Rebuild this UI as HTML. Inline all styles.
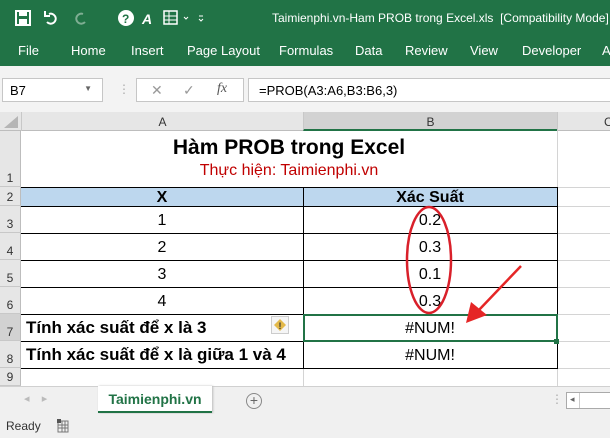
<!DOCTYPE html>
<html><head><meta charset="utf-8"><style>
*{margin:0;padding:0;box-sizing:border-box}
body{width:610px;height:438px;overflow:hidden;font-family:"Liberation Sans",sans-serif;background:#fff;position:relative}
.a{position:absolute}
.t{color:#fff;font-size:13px;white-space:nowrap}
.rh{position:absolute;left:0;width:21px;background:#e6e6e6;border-bottom:1px solid #c8c8c8;border-right:1px solid #bdbdbd;font-size:12px;color:#333;text-align:center}
.c{position:absolute;display:flex;align-items:center;justify-content:center;font-size:16px;color:#000;padding-top:2px}
.g{position:absolute;background:#d4d4d4}
</style></head><body>
<div class="a" style="left:0;top:0;width:610px;height:66px;background:#217346"></div>
<svg class="a" style="left:14px;top:8px" width="190" height="20" viewBox="0 0 190 20">
<rect x="2" y="3" width="14" height="14" fill="none" stroke="#fff" stroke-width="2"/><rect x="5" y="3" width="8" height="5" fill="#fff"/><rect x="5" y="11" width="8" height="6" fill="#fff"/>
<path d="M35 6 a5 5 0 1 1 -2 8" fill="none" stroke="#fff" stroke-width="2"/><path d="M31 3 v5 h5" fill="none" stroke="#fff" stroke-width="2"/>
<path d="M69 6 a5 5 0 1 0 2 8" fill="none" stroke="#7fae93" stroke-width="2"/>
<circle cx="112" cy="10" r="8" fill="#fff"/><text x="108" y="15" font-size="12" font-weight="bold" fill="#217346" font-family="Liberation Sans">?</text>
<text x="128" y="16" font-size="14" font-style="italic" font-weight="bold" fill="#fff" font-family="Liberation Sans">A</text>
<rect x="150" y="3" width="13" height="13" fill="none" stroke="#fff" stroke-width="1.5"/><path d="M150 8h13M150 12h13M155 3v13" stroke="#fff"/>
<path d="M170 9l2 2 2-2M185 8h4M185 11l2 2 2-2" stroke="#fff" fill="none"/>
</svg>
<div class="a t" style="left:272px;top:11px;font-size:12px">Taimienphi.vn-Ham PROB trong Excel.xls&nbsp; [Compatibility Mode]</div>
<div class="a t" style="left:18px;top:43px">File</div>
<div class="a t" style="left:71px;top:43px">Home</div>
<div class="a t" style="left:131px;top:43px">Insert</div>
<div class="a t" style="left:187px;top:43px">Page Layout</div>
<div class="a t" style="left:279px;top:43px">Formulas</div>
<div class="a t" style="left:355px;top:43px">Data</div>
<div class="a t" style="left:405px;top:43px">Review</div>
<div class="a t" style="left:470px;top:43px">View</div>
<div class="a t" style="left:522px;top:43px">Developer</div>
<div class="a t" style="left:602px;top:43px">A</div>
<div class="a" style="left:0;top:66px;width:610px;height:46px;background:#f3f3f3"></div>
<div class="a" style="left:2px;top:78px;width:101px;height:24px;background:#fff;border:1px solid #c6c6c6;font-size:13px;padding:4px 7px">B7<span style="position:absolute;right:10px;top:5px;font-size:8px;color:#666">▼</span></div>
<div class="a" style="left:118px;top:82px;color:#aaa;font-size:12px">⋮</div>
<div class="a" style="left:136px;top:78px;width:108px;height:24px;background:#fff;border:1px solid #c6c6c6;font-size:14px;color:#999"><span class="a" style="left:14px;top:3px">✕</span><span class="a" style="left:46px;top:3px">✓</span><span class="a" style="left:80px;top:2px;font-style:italic;font-family:'Liberation Serif';color:#555">fx</span></div>
<div class="a" style="left:248px;top:78px;width:370px;height:24px;background:#fff;border:1px solid #c6c6c6;font-size:13px;padding:4px 10px">=PROB(A3:A6,B3:B6,3)</div>
<div class="a" style="left:0;top:112px;width:610px;height:19px;background:#e6e6e6;border-bottom:1px solid #bdbdbd"></div>
<div class="a" style="left:4px;top:116px;width:0;height:0;border-left:14px solid transparent;border-bottom:12px solid #b5b5b5"></div>
<div class="a" style="left:21px;top:112px;width:282px;height:19px;border-left:1px solid #c8c8c8;text-align:center;font-size:12px;padding-top:3px;color:#333">A</div>
<div class="a" style="left:303px;top:112px;width:254px;height:19px;background:#d2d2d2;border-bottom:2px solid #217346;border-left:1px solid #c8c8c8;text-align:center;font-size:12px;padding-top:3px;color:#333">B</div>
<div class="a" style="left:557px;top:112px;width:60px;height:19px;border-left:1px solid #c8c8c8;font-size:12px;padding:3px 0 0 46px;color:#333">C</div>
<div class="rh" style="top:131px;height:56px;padding-top:40px">1</div>
<div class="rh" style="top:187px;height:19px;padding-top:3px">2</div>
<div class="rh" style="top:206px;height:27px;padding-top:11px">3</div>
<div class="rh" style="top:233px;height:27px;padding-top:11px">4</div>
<div class="rh" style="top:260px;height:27px;padding-top:11px">5</div>
<div class="rh" style="top:287px;height:27px;padding-top:11px">6</div>
<div class="rh" style="top:314px;height:27px;padding-top:11px;background:#d2d2d2">7</div>
<div class="rh" style="top:341px;height:27px;padding-top:11px">8</div>
<div class="rh" style="top:368px;height:18px;padding-top:2px">9</div>
<div class="g" style="left:557px;top:131px;width:1px;height:255px"></div>
<div class="g" style="left:557px;top:187px;width:60px;height:1px"></div>
<div class="g" style="left:557px;top:206px;width:60px;height:1px"></div>
<div class="g" style="left:557px;top:233px;width:60px;height:1px"></div>
<div class="g" style="left:557px;top:260px;width:60px;height:1px"></div>
<div class="g" style="left:557px;top:287px;width:60px;height:1px"></div>
<div class="g" style="left:557px;top:314px;width:60px;height:1px"></div>
<div class="g" style="left:557px;top:341px;width:60px;height:1px"></div>
<div class="g" style="left:557px;top:368px;width:60px;height:1px"></div>
<div class="g" style="left:303px;top:368px;width:1px;height:18px"></div>
<div class="a" style="left:21px;top:136px;width:536px;text-align:center;font-size:21px;font-weight:bold">Hàm PROB trong Excel</div>
<div class="a" style="left:21px;top:162px;width:536px;text-align:center;font-size:16px;color:#c00000">Thực hiện: Taimienphi.vn</div>
<div class="a" style="left:21px;top:187px;width:537px;height:182px;border:1px solid #000;border-left:none"></div>
<div class="a" style="left:21px;top:188px;width:536px;height:18px;background:#bdd7ee"></div>
<div class="a" style="left:303px;top:187px;width:1px;height:181px;background:#000"></div>
<div class="a" style="left:21px;top:206px;width:536px;height:1px;background:#000"></div>
<div class="a" style="left:21px;top:233px;width:536px;height:1px;background:#000"></div>
<div class="a" style="left:21px;top:260px;width:536px;height:1px;background:#000"></div>
<div class="a" style="left:21px;top:287px;width:536px;height:1px;background:#000"></div>
<div class="a" style="left:21px;top:314px;width:536px;height:1px;background:#000"></div>
<div class="a" style="left:21px;top:341px;width:536px;height:1px;background:#000"></div>
<div class="c" style="left:21px;top:187px;width:282px;height:19px;font-weight:bold">X</div>
<div class="c" style="left:303px;top:187px;width:254px;height:19px;font-weight:bold">Xác Suất</div>
<div class="c" style="left:21px;top:206px;width:282px;height:27px">1</div>
<div class="c" style="left:21px;top:233px;width:282px;height:27px">2</div>
<div class="c" style="left:21px;top:260px;width:282px;height:27px">3</div>
<div class="c" style="left:21px;top:287px;width:282px;height:27px">4</div>
<div class="c" style="left:303px;top:206px;width:254px;height:27px">0.2</div>
<div class="c" style="left:303px;top:233px;width:254px;height:27px">0.3</div>
<div class="c" style="left:303px;top:260px;width:254px;height:27px">0.1</div>
<div class="c" style="left:303px;top:287px;width:254px;height:27px">0.3</div>
<div class="a" style="left:26px;top:318px;font-size:17px;font-weight:bold">Tính xác suất để x là 3</div>
<div class="a" style="left:26px;top:345px;font-size:17px;font-weight:bold">Tính xác suất để x là giữa 1 và 4</div>
<div class="c" style="left:303px;top:314px;width:254px;height:27px">#NUM!</div>
<div class="c" style="left:303px;top:341px;width:254px;height:27px">#NUM!</div>
<div class="a" style="left:303px;top:314px;width:255px;height:28px;border:2px solid #217346"></div>
<div class="a" style="left:554px;top:339px;width:5px;height:5px;background:#217346"></div>
<div class="a" style="left:271px;top:316px;width:18px;height:18px;border:1px solid #ccc;background:#f5f5f5"></div>
<svg class="a" style="left:273px;top:318px" width="14" height="14"><path d="M7 1L13 7L7 13L1 7Z" fill="#e3b94a"/><text x="5.5" y="11" font-size="9" font-weight="bold" fill="#333">!</text></svg>
<svg class="a" style="left:0;top:0" width="610" height="438">
<ellipse cx="429" cy="260" rx="22" ry="53" fill="none" stroke="#d9202a" stroke-width="2.5"/>
<line x1="521" y1="266" x2="478" y2="311" stroke="#e52626" stroke-width="2.5"/>
<path d="M466 323 L471 302 L487 315 Z" fill="#e52626"/>
</svg>
<div class="a" style="left:0;top:386px;width:610px;height:28px;background:#f0f0f0;border-top:1px solid #d0d0d0"></div>
<div class="a" style="left:24px;top:392px;color:#bbb;font-size:11px">◂&nbsp;&nbsp;&nbsp;&nbsp;▸</div>
<div class="a" style="left:98px;top:386px;width:114px;height:27px;background:#fff;border-bottom:2px solid #217346;color:#217346;font-weight:bold;font-size:14px;text-align:center;padding-top:5px;box-shadow:1px 0 2px #bbb">Taimienphi.vn</div>
<div class="a" style="left:246px;top:393px;width:16px;height:16px;border:1px solid #888;border-radius:50%;color:#666;font-size:14px;line-height:13px;text-align:center">+</div>
<div class="a" style="left:551px;top:392px;color:#aaa;font-size:12px">⋮</div>
<div class="a" style="left:566px;top:392px;width:50px;height:17px;border:1px solid #aaa;background:#fff"><span style="position:absolute;left:3px;top:1px;font-size:9px;color:#666">◂</span><div style="position:absolute;left:12px;top:0;width:1px;height:15px;background:#ccc"></div></div>
<div class="a" style="left:0;top:414px;width:610px;height:24px;background:#f0f0f0"></div>
<div class="a" style="left:6px;top:419px;font-size:12px;color:#333">Ready</div>
<svg class="a" style="left:56px;top:418px" width="14" height="16"><rect x="2" y="3" width="10" height="11" fill="none" stroke="#777"/><path d="M2 7h10M2 10h10M6 3v11M9 3v11" stroke="#777"/><rect x="1" y="1" width="4" height="4" fill="#555"/></svg>
</body></html>
